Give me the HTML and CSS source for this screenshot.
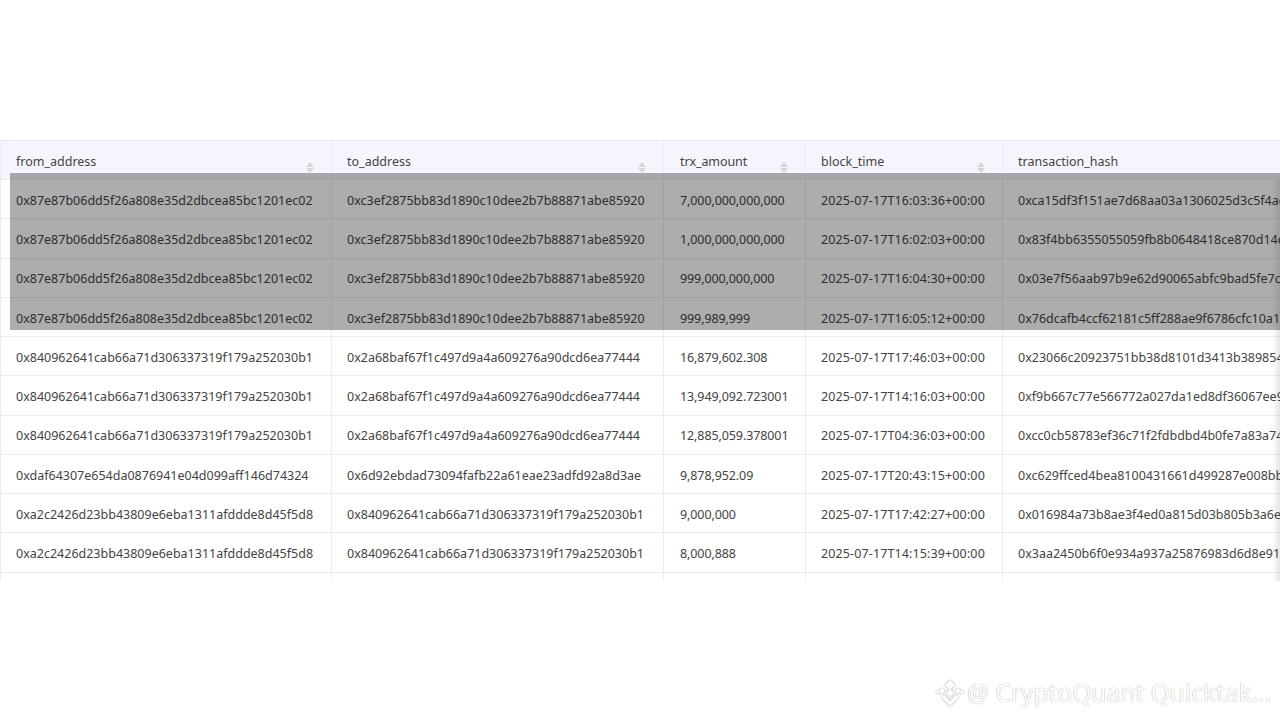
FILE: index.html
```html
<!DOCTYPE html>
<html lang="en">
<head>
<meta charset="utf-8">
<title>Transfers</title>
<link rel="stylesheet" href="styles.css">
</head>
<body>
<main class="frame">
  <div class="table-wrap">
    <table class="data">
      <colgroup>
        <col class="c1"><col class="c2"><col class="c3"><col class="c4"><col class="c5">
      </colgroup>
      <thead>
        <tr>
          <th><div class="th"><span>from_address</span><i class="sort"></i></div></th>
          <th><div class="th"><span>to_address</span><i class="sort"></i></div></th>
          <th><div class="th"><span>trx_amount</span><i class="sort"></i></div></th>
          <th><div class="th"><span>block_time</span><i class="sort"></i></div></th>
          <th><div class="th"><span>transaction_hash</span></div></th>
        </tr>
      </thead>
      <tbody>
        <tr><td>0x87e87b06dd5f26a808e35d2dbcea85bc1201ec02</td><td>0xc3ef2875bb83d1890c10dee2b7b88871abe85920</td><td>7,000,000,000,000</td><td>2025-07-17T16:03:36+00:00</td><td>0xca15df3f151ae7d68aa03a1306025d3c5f4ac81e2</td></tr>
        <tr><td>0x87e87b06dd5f26a808e35d2dbcea85bc1201ec02</td><td>0xc3ef2875bb83d1890c10dee2b7b88871abe85920</td><td>1,000,000,000,000</td><td>2025-07-17T16:02:03+00:00</td><td>0x83f4bb6355055059fb8b0648418ce870d14c0a7e9</td></tr>
        <tr><td>0x87e87b06dd5f26a808e35d2dbcea85bc1201ec02</td><td>0xc3ef2875bb83d1890c10dee2b7b88871abe85920</td><td>999,000,000,000</td><td>2025-07-17T16:04:30+00:00</td><td>0x03e7f56aab97b9e62d90065abfc9bad5fe7c4d120</td></tr>
        <tr><td>0x87e87b06dd5f26a808e35d2dbcea85bc1201ec02</td><td>0xc3ef2875bb83d1890c10dee2b7b88871abe85920</td><td>999,989,999</td><td>2025-07-17T16:05:12+00:00</td><td>0x76dcafb4ccf62181c5ff288ae9f6786cfc10a1b37</td></tr>
        <tr><td>0x840962641cab66a71d306337319f179a252030b1</td><td>0x2a68baf67f1c497d9a4a609276a90dcd6ea77444</td><td>16,879,602.308</td><td>2025-07-17T17:46:03+00:00</td><td>0x23066c20923751bb38d8101d3413b389854e2f1a0</td></tr>
        <tr><td>0x840962641cab66a71d306337319f179a252030b1</td><td>0x2a68baf67f1c497d9a4a609276a90dcd6ea77444</td><td>13,949,092.723001</td><td>2025-07-17T14:16:03+00:00</td><td>0xf9b667c77e566772a027da1ed8df36067ee93b0c4</td></tr>
        <tr><td>0x840962641cab66a71d306337319f179a252030b1</td><td>0x2a68baf67f1c497d9a4a609276a90dcd6ea77444</td><td>12,885,059.378001</td><td>2025-07-17T04:36:03+00:00</td><td>0xcc0cb58783ef36c71f2fdbdbd4b0fe7a83a74d2e6</td></tr>
        <tr><td>0xdaf64307e654da0876941e04d099aff146d74324</td><td>0x6d92ebdad73094fafb22a61eae23adfd92a8d3ae</td><td>9,878,952.09</td><td>2025-07-17T20:43:15+00:00</td><td>0xc629ffced4bea8100431661d499287e008bb17c3a</td></tr>
        <tr><td>0xa2c2426d23bb43809e6eba1311afddde8d45f5d8</td><td>0x840962641cab66a71d306337319f179a252030b1</td><td>9,000,000</td><td>2025-07-17T17:42:27+00:00</td><td>0x016984a73b8ae3f4ed0a815d03b805b3a6e02c9f4</td></tr>
        <tr><td>0xa2c2426d23bb43809e6eba1311afddde8d45f5d8</td><td>0x840962641cab66a71d306337319f179a252030b1</td><td>8,000,888</td><td>2025-07-17T14:15:39+00:00</td><td>0x3aa2450b6f0e934a937a25876983d6d8e91c47ab0</td></tr>
        <tr><td></td><td></td><td></td><td></td><td></td></tr>
      </tbody>
    </table>
    <div class="edge-shadow"></div>
    <div class="selection"></div>
  </div>
  <div class="watermark">
    <svg class="wm-logo" viewBox="0 0 30 30" width="30" height="30" aria-hidden="true">
      <path d="M15 2l5 5-5 5-5-5z M7 10l3 3-3 3-3-3z M23 10l3 3-3 3-3-3z M15 11l4 4-4 4-4-4z M9 17l6 6 6-6 2.500 2.500-8.500 8.500-8.500-8.500z M1 14l2-2 2 2-2 2z M25 14l2-2 2 2-2 2z"/>
    </svg>
    <span class="wm-text">@ CryptoQuant Quicktak...</span>
  </div>
</main>
</body>
</html>
```
FILE: styles.css
```css
* { box-sizing: border-box; }
html, body { margin: 0; padding: 0; background: #fff; }
body { width: 1280px; height: 720px; overflow: hidden; font-family: "Noto Sans", "Open Sans", sans-serif; }
.frame { position: relative; width: 1280px; height: 720px; padding-top: 140px; }
.table-wrap { position: relative; width: 1280px; height: 441px; overflow: hidden; }
.data { table-layout: fixed; width: 1600px; border-collapse: separate; border-spacing: 0; font-size: 12.500px; color: #444; }
.c1 { width: 332px; } .c2 { width: 332px; } .c3 { width: 142px; } .c4 { width: 197px; } .c5 { width: 597px; }
.data th { height: 40px; padding: 0; font-weight: 400; text-align: left; background: #f6f5fe; border-top: 1px solid #e9e9f0; border-right: 1px solid #ececf2; border-bottom: 1px solid #ececf0; }
.th { display: flex; justify-content: space-between; height: 100%; padding: 2px 15px 0; position: relative; align-items: center; }
.sort { position: absolute; right: 17px; top: 21px; width: 8px; height: 12px; }
.sort::before, .sort::after { content: ""; position: absolute; left: 0; border-left: 4px solid transparent; border-right: 4px solid transparent; }
.sort::before { top: 0; border-bottom: 5px solid #d6d6d6; }
.sort::after { top: 6px; border-top: 5px solid #d6d6d6; }
.data td { height: 39.250px; padding: 2.500px 15px 0; white-space: nowrap; overflow: hidden; border-right: 1px solid #ececec; border-bottom: 1px solid #ececec; }
.data td:first-child, .data th:first-child { border-left: 1px solid #ececec; }
.data td:nth-child(3) { padding-left: 16px; letter-spacing: -.1px; }
.data th:nth-child(3) .th { padding-left: 16px; letter-spacing: -.1px; }
.data td:nth-child(4) { letter-spacing: .12px; }
.edge-shadow { position: absolute; right: 0; top: 40px; bottom: 0; width: 8px; background: linear-gradient(to right, rgba(0,0,0,0), rgba(0,0,0,.1)); }
.selection { position: absolute; left: 10px; right: 0; top: 33px; height: 157px; background: rgba(0,0,0,.32); }
.watermark { position: absolute; left: 935px; top: 678px; display: flex; align-items: center; gap: 2px; }
.wm-logo { fill: #fff; filter: drop-shadow(0 0 1px #999); }
.wm-text { font-size: 24.500px; line-height: 30px; color: #fff; text-shadow: 0 0 1px #8a8a8a; white-space: nowrap; }
```
